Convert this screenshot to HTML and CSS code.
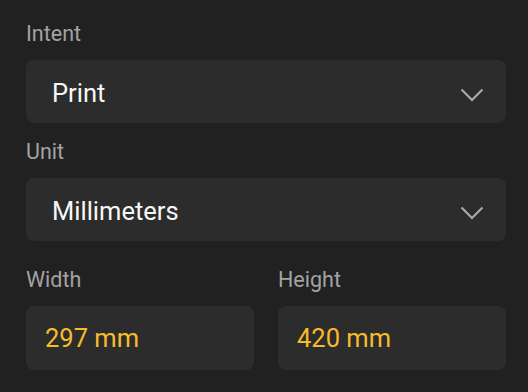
FILE: index.html
```html
<!DOCTYPE html>
<html>
<head>
  <meta charset="UTF-8">
  <meta name="viewport" content="width=device-width, initial-scale=1.0">
  <link rel="stylesheet" href="styles.css">
</head>
<body>
  <div class="panel">
    <div class="field">
      <div class="field-label">Intent</div>
      <div class="select-box">
        <span class="select-value">Print</span>
        <svg class="chevron" width="24" height="15" viewBox="0 0 24 15">
          <path d="M1.5 1.5 L12 12 L22.5 1.5" fill="none" stroke="#a9a9a9" stroke-width="2.2"/>
        </svg>
      </div>
    </div>

    <div class="field">
      <div class="field-label">Unit</div>
      <div class="select-box">
        <span class="select-value">Millimeters</span>
        <svg class="chevron" width="24" height="15" viewBox="0 0 24 15">
          <path d="M1.5 1.5 L12 12 L22.5 1.5" fill="none" stroke="#a9a9a9" stroke-width="2.2"/>
        </svg>
      </div>
    </div>

    <div class="size-row">
      <div class="field">
        <div class="field-label">Width</div>
        <div class="input-box">297 mm</div>
      </div>
      <div class="field">
        <div class="field-label">Height</div>
        <div class="input-box">420 mm</div>
      </div>
    </div>
  </div>
</body>
</html>
```

FILE: styles.css
```css
* {
  margin: 0;
  padding: 0;
  box-sizing: border-box;
}

body {
  background: #212121;
  font-family: Roboto, 'Noto Sans', sans-serif;
  color: #f5f5f5;
  height: 100vh;
  overflow: hidden;
}

.panel {
  padding: 21px 22px 0 26px;
  display: flex;
  flex-direction: column;
  gap: 16px;
}

.field {
  display: flex;
  flex-direction: column;
  gap: 13px;
}

.field-label {
  font-size: 21.5px;
  line-height: 26px;
  color: #a3a3a3;
}

.select-box {
  height: 63px;
  background: #2c2c2c;
  border-radius: 8px;
  padding: 18px 22px 0 26px;
  display: flex;
  justify-content: space-between;
  align-items: flex-start;
}

.select-value {
  font-size: 25.5px;
  line-height: 30px;
  color: #f7f7f7;
}

.chevron {
  margin-top: 10px;
}

.size-row {
  display: grid;
  grid-template-columns: 1fr 1fr;
  gap: 24px;
  margin-top: 10px;
}

.input-box {
  height: 64px;
  background: #2c2c2c;
  border-radius: 8px;
  padding: 17px 18px 0 19px;
  font-size: 25.5px;
  line-height: 30px;
  color: #f8bc2b;
}
```
